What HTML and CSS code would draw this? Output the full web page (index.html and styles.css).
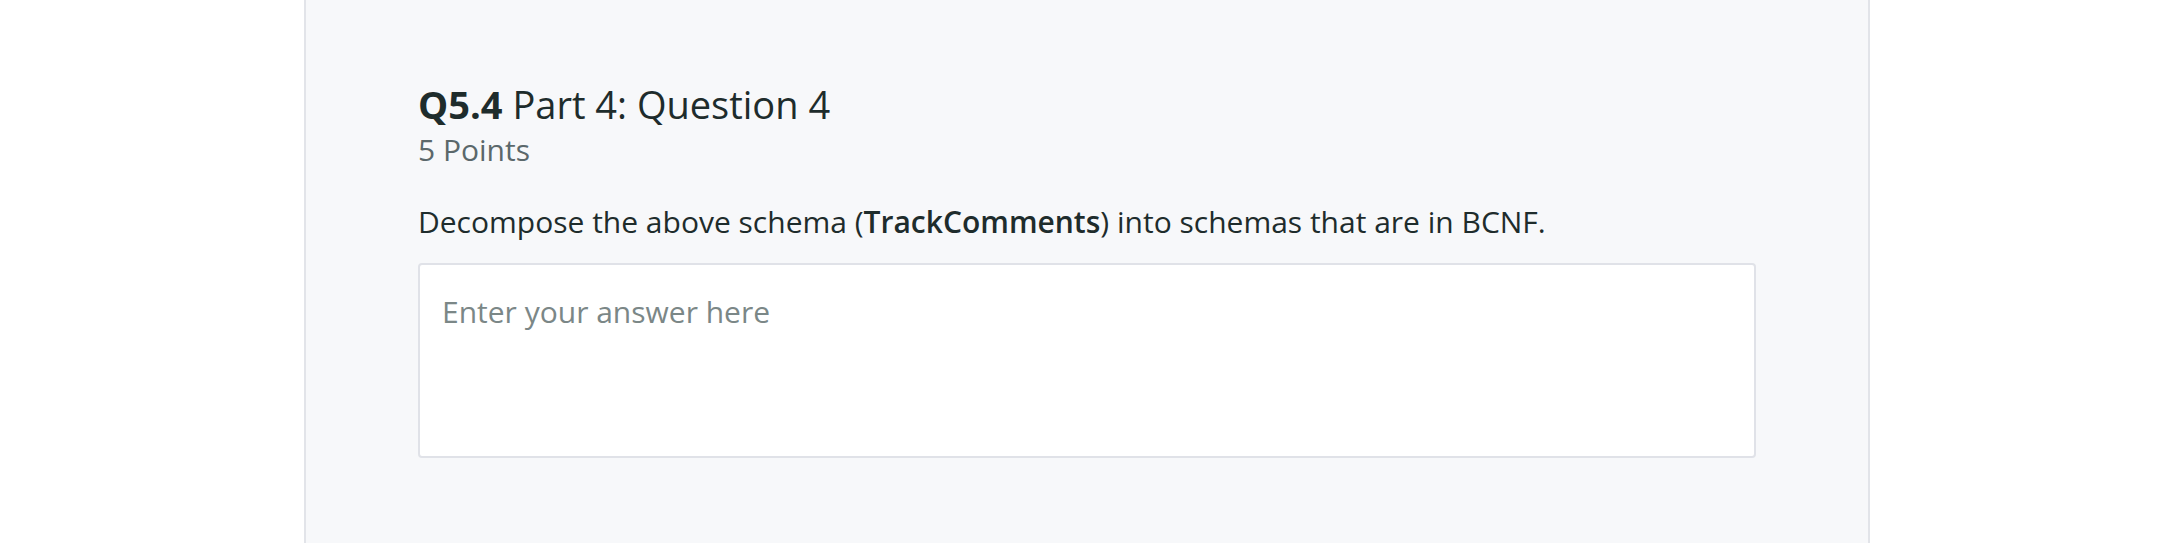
FILE: index.html
```html
<!DOCTYPE html>
<html lang="en">
<head>
<meta charset="utf-8">
<title>Q5.4 Part 4: Question 4</title>
<link rel="stylesheet" href="styles.css">
</head>
<body>
<main class="panel">
  <section class="question">
    <h2 class="question-title"><strong>Q5.4</strong> Part 4: Question 4</h2>
    <div class="question-points">5 Points</div>
    <p class="question-prompt">Decompose the above schema (<strong>TrackComments</strong>) into schemas that are in BCNF.</p>
    <textarea class="answer" placeholder="Enter your answer here"></textarea>
  </section>
</main>
</body>
</html>
```
FILE: styles.css
```css
html, body {
  margin: 0;
  padding: 0;
  background: #ffffff;
  height: 100%;
}
body {
  font-family: "Open Sans", Lato, sans-serif;
  color: #1e2c2c;
  overflow: hidden;
}
.panel {
  margin-left: 304px;
  width: 1562px;
  height: 543px;
  background: #f7f8fa;
  border-left: 2px solid #e2e4e9;
  border-right: 2px solid #e2e4e9;
  box-sizing: content-box;
}
.question {
  padding: 82px 0 0 112px;
  display: flex;
  flex-direction: column;
}
.question-title {
  margin: 0;
  font-size: 38px;
  font-weight: 400;
  line-height: 44px;
}
.question-title strong {
  font-weight: 700;
}
.question-points {
  margin-top: 6px;
  font-size: 30px;
  line-height: 36px;
  color: #5b686b;
}
.question-prompt {
  margin: 36px 0 0 0;
  font-size: 30px;
  line-height: 36px;
}
.question-prompt strong {
  font-weight: 650;
}
.answer {
  margin-top: 23px;
  width: 1338px;
  height: 195px;
  box-sizing: border-box;
  border: 2px solid #e0e2e8;
  border-radius: 4px;
  background: #ffffff;
  padding: 29px 22px;
  font-family: "Open Sans", Lato, sans-serif;
  font-size: 30px;
  line-height: 36px;
  color: #1e2c2c;
  resize: none;
  outline: none;
}
.answer::placeholder {
  color: #7b8787;
  opacity: 1;
}
```
